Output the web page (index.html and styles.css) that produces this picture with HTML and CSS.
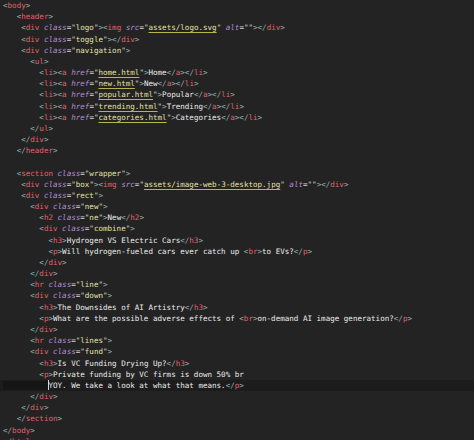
FILE: index.html
```html
<!DOCTYPE html>
<html>
<head>
<meta charset="utf-8">
<link rel="stylesheet" href="styles.css">
</head>
<body>
<div class="editor">
<div class="ln"><span class="p">&lt;</span><span class="t">body</span><span class="p">&gt;</span></div>
<div class="ln">   <span class="p">&lt;</span><span class="t">header</span><span class="p">&gt;</span></div>
<div class="ln">    <span class="p">&lt;</span><span class="t">div</span> <span class="a">class</span><span class="e">=</span><span class="q">"</span><span class="s">logo</span><span class="q">"</span><span class="p">&gt;&lt;</span><span class="t">img</span> <span class="a">src</span><span class="e">=</span><span class="q">"</span><span class="s u">assets/logo.svg</span><span class="q">"</span> <span class="a">alt</span><span class="e">=</span><span class="q">""</span><span class="p">&gt;&lt;/</span><span class="t">div</span><span class="p">&gt;</span></div>
<div class="ln">    <span class="p">&lt;</span><span class="t">div</span> <span class="a">class</span><span class="e">=</span><span class="q">"</span><span class="s">toggle</span><span class="q">"</span><span class="p">&gt;&lt;/</span><span class="t">div</span><span class="p">&gt;</span></div>
<div class="ln">    <span class="p">&lt;</span><span class="t">div</span> <span class="a">class</span><span class="e">=</span><span class="q">"</span><span class="s">navigation</span><span class="q">"</span><span class="p">&gt;</span></div>
<div class="ln">      <span class="p">&lt;</span><span class="t">ul</span><span class="p">&gt;</span></div>
<div class="ln">        <span class="p">&lt;</span><span class="t">li</span><span class="p">&gt;&lt;</span><span class="t">a</span> <span class="a">href</span><span class="e">=</span><span class="q">"</span><span class="s u">home.html</span><span class="q">"</span><span class="p">&gt;</span><span class="x">Home</span><span class="p">&lt;/</span><span class="t">a</span><span class="p">&gt;&lt;/</span><span class="t">li</span><span class="p">&gt;</span></div>
<div class="ln">        <span class="p">&lt;</span><span class="t">li</span><span class="p">&gt;&lt;</span><span class="t">a</span> <span class="a">href</span><span class="e">=</span><span class="q">"</span><span class="s u">new.html</span><span class="q">"</span><span class="p">&gt;</span><span class="x">New</span><span class="p">&lt;/</span><span class="t">a</span><span class="p">&gt;&lt;/</span><span class="t">li</span><span class="p">&gt;</span></div>
<div class="ln">        <span class="p">&lt;</span><span class="t">li</span><span class="p">&gt;&lt;</span><span class="t">a</span> <span class="a">href</span><span class="e">=</span><span class="q">"</span><span class="s u">popular.html</span><span class="q">"</span><span class="p">&gt;</span><span class="x">Popular</span><span class="p">&lt;/</span><span class="t">a</span><span class="p">&gt;&lt;/</span><span class="t">li</span><span class="p">&gt;</span></div>
<div class="ln">        <span class="p">&lt;</span><span class="t">li</span><span class="p">&gt;&lt;</span><span class="t">a</span> <span class="a">href</span><span class="e">=</span><span class="q">"</span><span class="s u">trending.html</span><span class="q">"</span><span class="p">&gt;</span><span class="x">Trending</span><span class="p">&lt;/</span><span class="t">a</span><span class="p">&gt;&lt;/</span><span class="t">li</span><span class="p">&gt;</span></div>
<div class="ln">        <span class="p">&lt;</span><span class="t">li</span><span class="p">&gt;&lt;</span><span class="t">a</span> <span class="a">href</span><span class="e">=</span><span class="q">"</span><span class="s u">categories.html</span><span class="q">"</span><span class="p">&gt;</span><span class="x">Categories</span><span class="p">&lt;/</span><span class="t">a</span><span class="p">&gt;&lt;/</span><span class="t">li</span><span class="p">&gt;</span></div>
<div class="ln">      <span class="p">&lt;/</span><span class="t">ul</span><span class="p">&gt;</span></div>
<div class="ln">    <span class="p">&lt;/</span><span class="t">div</span><span class="p">&gt;</span></div>
<div class="ln">   <span class="p">&lt;/</span><span class="t">header</span><span class="p">&gt;</span></div>
<div class="ln"> </div>
<div class="ln">   <span class="p">&lt;</span><span class="t">section</span> <span class="a">class</span><span class="e">=</span><span class="q">"</span><span class="s">wrapper</span><span class="q">"</span><span class="p">&gt;</span></div>
<div class="ln">    <span class="p">&lt;</span><span class="t">div</span> <span class="a">class</span><span class="e">=</span><span class="q">"</span><span class="s">box</span><span class="q">"</span><span class="p">&gt;&lt;</span><span class="t">img</span> <span class="a">src</span><span class="e">=</span><span class="q">"</span><span class="s u">assets/image-web-3-desktop.jpg</span><span class="q">"</span> <span class="a">alt</span><span class="e">=</span><span class="q">""</span><span class="p">&gt;&lt;/</span><span class="t">div</span><span class="p">&gt;</span></div>
<div class="ln">    <span class="p">&lt;</span><span class="t">div</span> <span class="a">class</span><span class="e">=</span><span class="q">"</span><span class="s">rect</span><span class="q">"</span><span class="p">&gt;</span></div>
<div class="ln">      <span class="p">&lt;</span><span class="t">div</span> <span class="a">class</span><span class="e">=</span><span class="q">"</span><span class="s">new</span><span class="q">"</span><span class="p">&gt;</span></div>
<div class="ln">        <span class="p">&lt;</span><span class="t">h2</span> <span class="a">class</span><span class="e">=</span><span class="q">"</span><span class="s">ne</span><span class="q">"</span><span class="p">&gt;</span><span class="x">New</span><span class="p">&lt;/</span><span class="t">h2</span><span class="p">&gt;</span></div>
<div class="ln">        <span class="p">&lt;</span><span class="t">div</span> <span class="a">class</span><span class="e">=</span><span class="q">"</span><span class="s">combine</span><span class="q">"</span><span class="p">&gt;</span></div>
<div class="ln">          <span class="p">&lt;</span><span class="t">h3</span><span class="p">&gt;</span><span class="x">Hydrogen VS Electric Cars</span><span class="p">&lt;/</span><span class="t">h3</span><span class="p">&gt;</span></div>
<div class="ln">          <span class="p">&lt;</span><span class="t">p</span><span class="p">&gt;</span><span class="x">Will hydrogen-fueled cars ever catch up </span><span class="p">&lt;</span><span class="t">br</span><span class="p">&gt;</span><span class="x">to EVs?</span><span class="p">&lt;/</span><span class="t">p</span><span class="p">&gt;</span></div>
<div class="ln">        <span class="p">&lt;/</span><span class="t">div</span><span class="p">&gt;</span></div>
<div class="ln">      <span class="p">&lt;/</span><span class="t">div</span><span class="p">&gt;</span></div>
<div class="ln">      <span class="p">&lt;</span><span class="t">hr</span> <span class="a">class</span><span class="e">=</span><span class="q">"</span><span class="s">line</span><span class="q">"</span><span class="p">&gt;</span></div>
<div class="ln">      <span class="p">&lt;</span><span class="t">div</span> <span class="a">class</span><span class="e">=</span><span class="q">"</span><span class="s">down</span><span class="q">"</span><span class="p">&gt;</span></div>
<div class="ln">        <span class="p">&lt;</span><span class="t">h3</span><span class="p">&gt;</span><span class="x">The Downsides of AI Artistry</span><span class="p">&lt;/</span><span class="t">h3</span><span class="p">&gt;</span></div>
<div class="ln">        <span class="p">&lt;</span><span class="t">p</span><span class="p">&gt;</span><span class="x">What are the possible adverse effects of </span><span class="p">&lt;</span><span class="t">br</span><span class="p">&gt;</span><span class="x">on-demand AI image generation?</span><span class="p">&lt;/</span><span class="t">p</span><span class="p">&gt;</span></div>
<div class="ln">      <span class="p">&lt;/</span><span class="t">div</span><span class="p">&gt;</span></div>
<div class="ln">      <span class="p">&lt;</span><span class="t">hr</span> <span class="a">class</span><span class="e">=</span><span class="q">"</span><span class="s">lines</span><span class="q">"</span><span class="p">&gt;</span></div>
<div class="ln">      <span class="p">&lt;</span><span class="t">div</span> <span class="a">class</span><span class="e">=</span><span class="q">"</span><span class="s">fund</span><span class="q">"</span><span class="p">&gt;</span></div>
<div class="ln">        <span class="p">&lt;</span><span class="t">h3</span><span class="p">&gt;</span><span class="x">Is VC Funding Drying Up?</span><span class="p">&lt;/</span><span class="t">h3</span><span class="p">&gt;</span></div>
<div class="ln">        <span class="p">&lt;</span><span class="t">p</span><span class="p">&gt;</span><span class="x">Private funding by VC firms is down 50% br</span></div>
<div class="ln current"><span class="ws">          </span><span class="cursor"></span><span class="x">YOY. We take a look at what that means.</span><span class="p">&lt;/</span><span class="t">p</span><span class="p">&gt;</span></div>
<div class="ln">      <span class="p">&lt;/</span><span class="t">div</span><span class="p">&gt;</span></div>
<div class="ln">    <span class="p">&lt;/</span><span class="t">div</span><span class="p">&gt;</span></div>
<div class="ln">   <span class="p">&lt;/</span><span class="t">section</span><span class="p">&gt;</span></div>
<div class="ln"><span class="p">&lt;/</span><span class="t">body</span><span class="p">&gt;</span></div>
<div class="ln"><span class="p">&lt;/</span><span class="t">html</span><span class="p">&gt;</span></div>
</div>
</body>
</html>
```

FILE: styles.css
```css
html, body {
  margin: 0;
  padding: 0;
  background: #232323;
  overflow: hidden;
}

.editor {
  font-family: "DejaVu Sans Mono", "Liberation Mono", monospace;
  font-size: 7.56px;
  line-height: 11.18px;
  color: #e2e2e2;
  padding-left: 3px;
}

.ln {
  white-space: pre;
  height: 11.18px;
}

.current {
  background: #1c1c1c;
  margin-left: -3px;
  padding-left: 3px;
}

.ws {
  background: #151515;
}

.cursor {
  display: inline-block;
  width: 1px;
  height: 10px;
  background: #d8d8d8;
  vertical-align: -2px;
  margin-right: -1px;
}

.p { color: #8cadab; }
.t { color: #e2626a; }
.a { color: #b68fd6; font-style: italic; }
.e { color: #d4d4d4; }
.q { color: #d8d6c0; }
.s { color: #e4e1a6; }
.x { color: #ececec; }

.u {
  text-decoration: underline;
  text-decoration-color: #b9b54e;
  text-decoration-thickness: 1px;
  text-underline-offset: 2px;
}
```
